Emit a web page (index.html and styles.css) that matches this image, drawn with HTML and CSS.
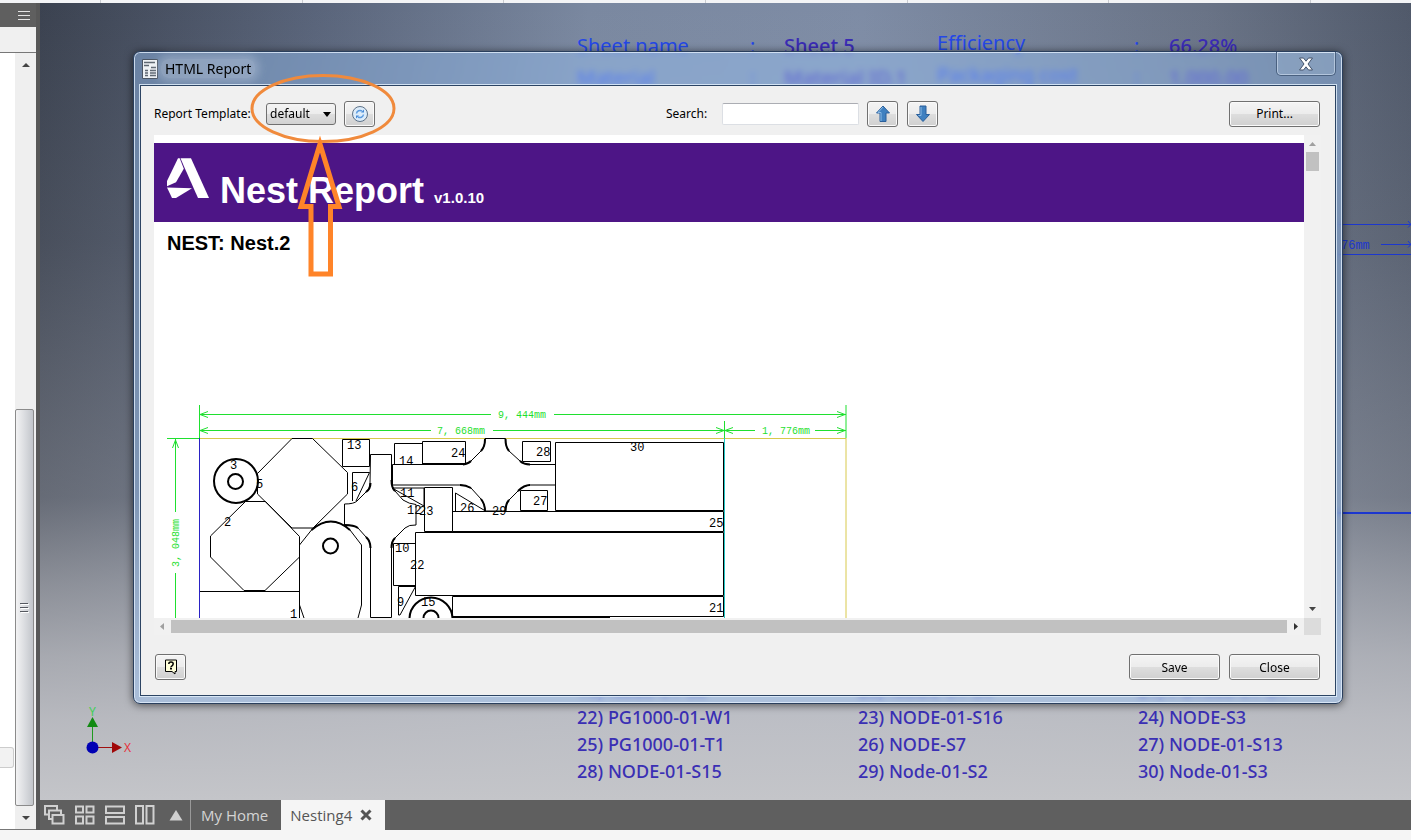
FILE: index.html
```
<!DOCTYPE html>
<html lang="en">
  <head>
    <meta charset="UTF-8" />
    <meta name="viewport" content="width=device-width, initial-scale=1.0" />
    <title>HTML Report</title>
    <link rel="stylesheet" href="styles.css">
  </head>
  <body>
    <div class="ribbon"><span></span><span></span><span></span><span></span><span></span><span></span><span></span></div>

    <div class="workspace">
      <aside class="browser">
        <div class="browser-header">
          <svg width="12" height="11" viewBox="0 0 12 11"><path d="M0 1.5h12M0 5.5h12M0 9.5h12" stroke="#e4e4e4" /></svg>
        </div>
        <div class="browser-tools"></div>
        <div class="browser-body">
          <div class="browser-tree"><div class="tree-button"></div></div>
          <div class="side-scroll">
            <div class="side-arrow"><svg width="8" height="4" viewBox="0 0 8 4"><path d="M0 4L4 0l4 4z" fill="#444" /></svg></div>
            <div class="side-thumb">
              <svg width="9" height="12" viewBox="0 0 9 12"><path d="M0 1.5h8M0 5.5h8M0 9.5h8" stroke="#55585f" /><path d="M1 2.5h8M1 6.5h8M1 10.5h8" stroke="#fff" /></svg>
            </div>
            <div class="side-arrow"><svg width="8" height="4" viewBox="0 0 8 4"><path d="M0 0h8L4 4z" fill="#444" /></svg></div>
          </div>
        </div>
      </aside>

      <div class="document">
        <main class="canvas">
          <div class="sheet-info">
            <span>Sheet name</span><span>:</span><b>Sheet 5</b><span class="raised">Efficiency</span><span>:</span><b>66.28%</b>
            <span>Material</span><span>:</span><b>Material ID.1</b><span class="raised">Packaging cost</span><span>:</span><b>1,000.00</b>
          </div>

          <div class="sheet-parts">
            <span>19) Node-01-S6</span><span>20) NODE-01-S4</span><span>21) PG1000-01-B1</span>
            <span>22) PG1000-01-W1</span><span>23) NODE-01-S16</span><span>24) NODE-S3</span>
            <span>25) PG1000-01-T1</span><span>26) NODE-S7</span><span>27) NODE-01-S13</span>
            <span>28) NODE-01-S15</span><span>29) Node-01-S2</span><span>30) Node-01-S3</span>
          </div>

          <svg class="sheet-lines" width="76" height="300" viewBox="1335 220 76 300">
            <g stroke="#1c37cf" fill="none">
              <path d="M1335 224.5h76M1381 244.5h30M1335 254.5h76M1408 221l3 3.5-3 3M1408 241l3 3.5-3 3" />
              <path d="M1335 513h76" stroke-width="2" />
            </g>
            <text x="1341" y="249">76mm</text>
          </svg>

          <svg class="triad" width="50" height="52" viewBox="84 704 50 52">
            <path d="M92.500 747V726" stroke="#1f9a1f" />
            <path d="M87 727l5.500-10 5.500 10z" fill="#128a12" />
            <path d="M92 747.500h21" stroke="#a01010" />
            <path d="M112 742l10 5.500-10 5.500z" fill="#a00808" />
            <circle cx="92.500" cy="747.500" r="6" fill="#0000b4" />
            <text x="89" y="716" fill="#3fd055">Y</text>
            <text x="124" y="752" fill="#e6323c">X</text>
          </svg>

          <section class="dialog">
            <header class="title-bar">
              <svg class="title-icon" width="16" height="20" viewBox="0 0 16 20">
                <path d="M.5.5h15v19H.5z" fill="#eef1f4" stroke="#4b5563" />
                <path d="M2 3.500h11M2 6.500h5M9 8.500h5M3 11.500h3M8 11.500h6M3 14h3M8 14h6M3 16.500h3M8 16.500h6" stroke="#5d6670" stroke-width="1.300" />
              </svg>
              <span class="title">HTML Report</span>
              <button class="window-close" type="button" aria-label="Close window">
                <svg width="16" height="14" viewBox="0 0 16 14"><path d="M1.500 1h4L8 4.200 10.500 1h4L10 7l4.500 6h-4L8 9.800 5.500 13h-4L6 7z" fill="#fff" stroke="#44536b" /></svg>
              </button>
            </header>

            <div class="client">
              <div class="toolbar">
                <div class="tool-group">
                  <label class="template-label" for="template">Report Template:</label>
                  <span class="select-box">
                    <select id="template"><option>default</option></select>
                  </span>
                  <button class="icon-button" type="button" aria-label="Refresh">
                    <svg width="18" height="18" viewBox="0 0 18 18">
                      <circle cx="9" cy="9" r="7.500" fill="#dcecfa" stroke="#5d7288" />
                      <path d="M5.500 8.500A3.600 3.600 0 0 1 11 6M12.500 9.500A3.600 3.600 0 0 1 7 12" fill="none" stroke="#5a9be0" stroke-width="1.500" />
                      <path d="M10 7.500h3V4.500zM8 10.500H5v3z" fill="#4489d6" />
                    </svg>
                  </button>
                </div>
                <div class="tool-group">
                  <label class="search-label" for="search">Search:</label>
                  <input id="search" type="text">
                  <button class="icon-button" type="button" aria-label="Previous match">
                    <svg width="16" height="18" viewBox="0 0 16 18"><path d="M8 1l6.500 7H11v8.500H5V8H1.500z" fill="#3f80c0" stroke="#2a5f9b" /><path d="M8 2L3 7.500h3V16" fill="none" stroke="#8abbe6" /></svg>
                  </button>
                  <button class="icon-button" type="button" aria-label="Next match">
                    <svg width="16" height="18" viewBox="0 0 16 18"><path d="M8 16.500l6.500-7H11V1H5v8.500H1.500z" fill="#3f80c0" stroke="#2a5f9b" /><path d="M3.500 10.500H6V2" fill="none" stroke="#8abbe6" /></svg>
                  </button>
                </div>
                <button class="text-button" type="button">Print...</button>
              </div>

              <div class="viewer">
                <article class="report">
                  <div class="banner">
                    <svg class="logo" width="43" height="41" viewBox="0 0 43 41">
                      <g fill="#fff">
                        <path d="M14.500.3H25l18 39.700H32L18.700 10z" />
                        <path d="M12 .3L1 23v5.300l9-4 7.800-13.500L13.700.3z" />
                        <path d="M1 29.500l25 .8L10 40H6z" />
                      </g>
                    </svg>
                    <h1>Nest Report <small>v1.0.10</small></h1>
                  </div>
                  <h2>NEST: Nest.2</h2>

                  <svg class="drawing" width="700" height="218" viewBox="154 400 700 218">
                    <!-- sheet borders -->
                    <path d="M199 438.500h647M846 438v180" stroke="#d8c94c" fill="none" />
                    <path d="M724.500 438v180" stroke="#25c7c7" />

                    <!-- dimensions -->
                    <g class="dimension">
                      <path d="M199.500 405v33M846 405v33M724.500 421v17M167 438.500h32" />
                      <path d="M199 414.500h292M554 414.500h292M199 430.500h232M493 430.500h262M815 430.500h31M175.500 439v73M175.500 573v45" />
                      <path d="M208 411.500l-8 3 8 3M837 411.500l8 3-8 3M208 427.500l-8 3 8 3M716 427.500l8 3-8 3M733 427.500l-8 3 8 3M837 427.500l8 3-8 3M172.500 448l3-8 3 8" />
                      <text x="498" y="418">9, 444mm</text>
                      <text x="437" y="434">7, 668mm</text>
                      <text x="762" y="434">1, 776mm</text>
                      <text transform="translate(179 567) rotate(-90)">3, 048mm</text>
                    </g>

                    <!-- nested parts -->
                    <g class="parts">
                      <path d="M555.500 442.500h168v68h-168zM452.500 511.500h271v20h-271zM415.500 532.500h308v63h-308zM452.500 596.500h271v20h-271z" />
                      <path d="M342.500 439.500h27v27h-27zM394.500 443.500h28v21h-28zM422.500 441.500h43v22h-43zM522.500 441.500h28v20h-28zM520.500 490.500h27v20h-27z" />
                      <path d="M424.500 487.500h28v44h-28zM393.500 543.500h22v42h-22zM199.500 591.500h100v30h-100z" />
                      <path d="M292 438.500h20.500l35 34V494L313 528h-21l-34.500-34v-20.500z" />
                      <path d="M245.500 501.500h20l34 35V557L265 590.500h-21L210.500 557v-21z" />
                      <path d="M304 618l-4.500-13v-60l12-15Q331 513 350 530l11.500 15v60l-3.500 13" />
                      <path d="M370.500 454.500h21V480q0 8 3.500 11l8 9q6 4 13 4.500V525q-7-.5-11 3l-10 10q-3.500 3-3.500 10v69.500h-21V548q0-7-4.500-11l-8-9q-4-3-13.500-3v-21q9.500 0 12.500-3l9-9q4-3 4-9z" />
                      <path d="M392.500 464.500H463q5-.5 8-3.500l10-10q4-4 4-12.500h20.500q0 8.500 3.500 12.500l11 10q4 3.500 10 3.500h25.500V485H530q-6 0-12 6l-9 9q-3.500 4-3.500 11H485q0-7-4-12l-10-11q-5-3-11-3h-67.500z" />
                      <path d="M352.500 501v-28.500h17L356 501M392 488h32v18zM455.500 511v-18l30 18M398.500 615v-28.500h17L400 615z" />
                      <g class="heavy">
                        <circle cx="236" cy="481" r="22" />
                        <circle cx="235.500" cy="481.500" r="7.500" />
                        <circle cx="330.500" cy="546" r="7.500" />
                        <circle cx="431" cy="619" r="21.500" />
                        <circle cx="431" cy="618" r="7.500" />
                        <path d="M311.500 530Q331 513 350 530M452 617h158M366 537q4.500 4 4.500 11M366 492q4.500-3 4.500-9M344.500 525q9.500 0 13.500 3M391.500 480q0 8 3.500 11M395 538q-3.500 3-3.500 10M471 461q-3 3-8 3.500M481 451q4-4 4-12M505.500 439q0 8 3.500 12M520 461q4 3.500 10 3.500M530 485q-6 0-12 6M509 500q-3.500 4-3.500 11M485 511q0-7-4-12M471 488q-5-3-11-3" />
                      </g>
                    </g>
                    <path d="M199.500 438v180" stroke="#2a22c4" />

                    <g class="part-numbers">
                      <text x="230" y="469">3</text><text x="256" y="488">5</text><text x="224" y="526">2</text>
                      <text x="290" y="618">1</text><text x="347" y="449">13</text><text x="351" y="491">6</text>
                      <text x="399" y="465">14</text><text x="451" y="457">24</text><text x="536" y="456">28</text>
                      <text x="400" y="497">11</text><text x="407" y="514">12</text><text x="419" y="515">23</text>
                      <text x="395" y="552">10</text><text x="410" y="569">22</text><text x="397" y="606">9</text>
                      <text x="421" y="606">15</text><text x="460" y="512">26</text><text x="492" y="515">29</text>
                      <text x="533" y="505">27</text><text x="630" y="451">30</text><text x="709" y="527">25</text>
                      <text x="709" y="612">21</text>
                    </g>
                  </svg>
                </article>

                <div class="scroll-y">
                  <svg width="7" height="4" viewBox="0 0 7 4"><path d="M0 4l3.500-4L7 4z" fill="#a0a0a0" /></svg>
                  <div class="thumb-y"></div>
                  <svg class="last" width="7" height="4" viewBox="0 0 7 4"><path d="M0 0h7L3.500 4z" fill="#444" /></svg>
                </div>
                <div class="scroll-x">
                  <svg width="4" height="7" viewBox="0 0 4 7"><path d="M4 0v7L0 3.500z" fill="#a0a0a0" /></svg>
                  <div class="thumb-x"></div>
                  <svg width="4" height="7" viewBox="0 0 4 7"><path d="M0 0v7l4-3.500z" fill="#333" /></svg>
                </div>
                <div class="scroll-corner"></div>
              </div>

              <footer class="actions">
                <button class="icon-button help" type="button" aria-label="Help">
                  <svg width="14" height="16" viewBox="0 0 14 16">
                    <path d="M1.500 1h11v11.500h-1.500V15L8 12.500H1.500z" fill="#ffffd9" stroke="#000" />
                    <path d="M4.800 5q0-2 2.200-2t2.200 1.800Q9.200 6 8 6.800T7 8.500" fill="none" stroke="#000" stroke-width="1.500" />
                    <path d="M6 9.800h2" stroke="#000" stroke-width="1.600" />
                  </svg>
                </button>
                <button class="text-button" type="button">Save</button>
                <button class="text-button" type="button">Close</button>
              </footer>
            </div>

            <svg class="annotation" width="150" height="210" viewBox="250 70 150 210">
              <ellipse cx="323" cy="108.500" rx="71" ry="33" fill="none" stroke="#f08a3c" stroke-width="3" />
              <path d="M320 144l-19 62.500h10v67.500h19.500v-67.500H339z" fill="none" stroke="#ff8429" stroke-width="5" />
            </svg>
          </section>
        </main>

        <nav class="tabs">
          <div class="layout-buttons">
            <button type="button" aria-label="Cascade"><svg width="21" height="20" viewBox="0 0 21 20"><path d="M13 4.500V1H1v8.500h3M17 9V5.500H5V14h3M8.500 10h11v8.500h-11z" /></svg></button>
            <button type="button" aria-label="Arrange all"><svg width="20" height="20" viewBox="0 0 20 20"><path d="M1 1.500h7v6H1zM11.500 1.500h7v6h-7zM1 11.500h7v7H1zM11.500 11.500h7v7h-7z" /></svg></button>
            <button type="button" aria-label="Tile horizontally"><svg width="20" height="20" viewBox="0 0 20 20"><path d="M1 1.500h18v6.500H1zM1 12h18v6.500H1z" /></svg></button>
            <button type="button" aria-label="Tile vertically"><svg width="20" height="20" viewBox="0 0 20 20"><path d="M1 1h7v17.500H1zM11.500 1h7v17.500h-7z" /></svg></button>
            <button type="button" aria-label="More"><svg width="14" height="20" viewBox="0 0 14 20"><path class="solid" d="M0.500 15.500L7 5l6.500 10.500z" /></svg></button>
          </div>
          <a class="tab" href="#home">My Home</a>
          <a class="tab active" href="#nesting">Nesting4
            <svg width="12" height="12" viewBox="0 0 12 12"><path d="M1.500 1.500l9 9M10.500 1.500l-9 9" stroke="#555" stroke-width="3" /></svg>
          </a>
        </nav>
      </div>
    </div>
    <div class="status-bar"></div>
  </body>
</html>
```
FILE: styles.css
```
* {
  box-sizing: border-box;
}

body {
  margin: 0;
  height: 100vh;
  display: flex;
  flex-direction: column;
  overflow: hidden;
  background: #f5f5f5;
  font-family: "Noto Sans", sans-serif;
  font-size: 12px;
  color: #000;
}

svg {
  display: block;
  flex: none;
}

button,
input,
select {
  font: inherit;
  color: inherit;
}

.ribbon {
  flex: none;
  height: 3px;
  display: flex;
  justify-content: space-around;
  background: #f3f4f6;
}

.ribbon span {
  width: 1px;
  background: #c9cbd0;
}

.workspace {
  flex: 1;
  min-height: 0;
  display: flex;
}

.status-bar {
  flex: none;
  height: 10px;
  background: #f5f5f5;
}

/* browser panel */
.browser {
  flex: none;
  width: 40px;
  display: flex;
  flex-direction: column;
  border-right: 4px solid #585858;
  background: #fff;
}

.browser-header {
  height: 24px;
  display: flex;
  align-items: center;
  justify-content: flex-end;
  padding-right: 6px;
  background: #5f5f5f;
}

.browser-tools {
  height: 26px;
  background: #f0f0f0;
  border-bottom: 1px solid #777;
}

.browser-body {
  flex: 1;
  display: flex;
  border-bottom: 1px solid #777;
}

.browser-tree {
  width: 15px;
  display: flex;
  align-items: flex-end;
  padding-bottom: 61px;
}

.tree-button {
  width: 14px;
  height: 21px;
  border: 1px solid #ccc;
  border-left: 0;
  border-radius: 0 3px 3px 0;
  background: #f2f2f2;
}

.side-scroll {
  flex: 1;
  display: flex;
  flex-direction: column;
  background: #efefef;
}

.side-arrow {
  height: 23px;
  display: flex;
  align-items: center;
  justify-content: center;
}

.side-thumb {
  height: 397px;
  width: 19px;
  margin-top: auto;
  display: flex;
  align-items: center;
  justify-content: center;
  border: 1px solid #8b8b8b;
  border-radius: 2px;
  background: linear-gradient(90deg, #f3f3f4, #d6d8dc 60%, #c2c5ca);
}

/* model view */
.document {
  flex: 1;
  min-width: 0;
  display: flex;
  flex-direction: column;
}

.canvas {
  flex: 1;
  position: relative;
  overflow: hidden;
  display: flex;
  flex-direction: column;
  justify-content: space-between;
  padding: 26px 0 16px 537px;
  background:
    linear-gradient(180deg, rgba(194, 195, 200, 0) 0%, rgba(194, 195, 200, 0.1) 30%, rgba(194, 195, 200, 0.32) 62%, rgba(194, 195, 200, 0.6) 73%, rgba(194, 195, 200, 0.8) 82%, rgba(194, 195, 200, 0.92) 90%, #c4c5c9 100%),
    linear-gradient(90deg, #3b4250 0%, #59647a 20%, #7a88a0 40%, #7e8ca5 60%, #697386 85%, #50596a 100%);
}

.sheet-info {
  display: grid;
  grid-template-columns: 173px 34px 153px 197px 35px auto;
  grid-auto-rows: 32px;
  align-items: center;
  font-size: 20px;
  color: #2447e6;
}

.sheet-info b {
  font-weight: 500;
  color: #3a2bb4;
}

.raised {
  padding-bottom: 6px;
}

.sheet-parts {
  display: grid;
  grid-template-columns: 281px 280px auto;
  grid-auto-rows: 27px;
  align-items: center;
  font-size: 18px;
  font-weight: 500;
  color: #3a2fb4;
}

.sheet-lines {
  position: absolute;
  top: 217px;
  right: 0;
  font-family: "Liberation Mono", monospace;
  font-size: 12px;
  fill: #1c37cf;
}

.triad {
  position: absolute;
  left: 44px;
  bottom: 44px;
  font-size: 12px;
}

/* report window */
.dialog {
  position: absolute;
  top: 48px;
  right: 68px;
  bottom: 96px;
  left: 93px;
  display: flex;
  flex-direction: column;
  padding: 0 6px 7px;
  border: 1px solid #2a3f5d;
  border-radius: 7px;
  background: rgba(155, 200, 255, 0.42);
  backdrop-filter: blur(3px);
  box-shadow: inset 0 0 0 1px rgba(225, 238, 252, 0.8), 0 1px 8px rgba(0, 0, 0, 0.6);
}

.title-bar {
  height: 33px;
  display: flex;
  align-items: center;
  gap: 7px;
  padding-left: 2px;
  font-size: 14px;
}

.title {
  padding: 0 4px;
  margin-left: -4px;
  border-radius: 8px;
  background: rgba(215, 225, 238, 0.3);
  box-shadow: 0 0 8px 4px rgba(215, 225, 238, 0.3);
}

.window-close {
  align-self: flex-start;
  width: 60px;
  height: 24px;
  margin-left: auto;
  display: flex;
  align-items: center;
  justify-content: center;
  border: 1px solid #4a6180;
  border-top: 0;
  border-radius: 0 0 5px 5px;
  background: rgba(180, 200, 222, 0.25);
  box-shadow: inset 0 0 0 1px rgba(225, 238, 252, 0.5);
}

.client {
  flex: 1;
  min-height: 0;
  display: flex;
  flex-direction: column;
  padding: 0 14px 0 13px;
  border: 1px solid #2c4463;
  outline: 1px solid rgba(225, 238, 252, 0.85);
  background: #f0f0f0;
}

.toolbar {
  height: 49px;
  flex: none;
  display: flex;
  align-items: center;
  justify-content: space-between;
  padding: 6px 1px 0 0;
}

.tool-group {
  display: flex;
  align-items: center;
}

.template-label {
  width: 112px;
}

.search-label {
  width: 56px;
}

.select-box {
  position: relative;
  margin-right: 8px;
}

.select-box::after {
  content: "";
  position: absolute;
  top: 9px;
  right: 5px;
  border: 4px solid transparent;
  border-top: 5px solid #000;
  border-bottom: 0;
  pointer-events: none;
}

.select-box select {
  display: block;
  width: 70px;
  height: 22px;
  padding: 0 3px;
  appearance: none;
  border: 1px solid #707070;
  border-radius: 3px;
  background: linear-gradient(#f4f4f4, #ececec 50%, #dedede 50%, #d2d2d2);
}

#search {
  width: 137px;
  height: 22px;
  padding: 0 4px;
  border: 1px solid #dcdfe4;
  border-top-color: #abadb3;
  border-radius: 2px;
  background: #fff;
}

.icon-button,
.text-button {
  display: flex;
  align-items: center;
  justify-content: center;
  height: 26px;
  padding: 0;
  border: 1px solid #707070;
  border-radius: 3px;
  background: linear-gradient(#f4f4f4, #ececec 50%, #dedede 50%, #d0d0d0);
  box-shadow: inset 0 0 0 1px #fafafa;
}

.icon-button {
  width: 31px;
}

#search + .icon-button {
  margin: 0 9px 0 8px;
}

.text-button {
  width: 91px;
}

.viewer {
  flex: 1;
  min-height: 0;
  display: grid;
  grid-template: minmax(0, 1fr) 17px / minmax(0, 1fr) 17px;
}

.report {
  display: flex;
  flex-direction: column;
  overflow: hidden;
  padding-top: 8px;
  background: #fff;
  font-family: "Liberation Sans", sans-serif;
}

.banner {
  flex: none;
  height: 79px;
  display: flex;
  align-items: flex-start;
  gap: 11px;
  padding: 15px 12px 0;
  background: #4d1586;
  color: #fff;
}

.banner h1 {
  margin: 12px 0 0;
  font-size: 36px;
  line-height: 41px;
}

.banner small {
  font-size: 15px;
}

.report h2 {
  margin: 9px 13px;
  font-size: 20px;
  line-height: 24px;
}

.drawing {
  margin-top: auto;
}

.dimension path {
  fill: none;
  stroke: #1fe02f;
}

.dimension text {
  fill: #1fe02f;
  font-family: "Liberation Mono", monospace;
  font-size: 10px;
}

.parts {
  fill: none;
  stroke: #000;
}

.heavy {
  stroke-width: 2;
}

.part-numbers {
  font-family: "Liberation Mono", monospace;
  font-size: 12px;
}

.scroll-y,
.scroll-x {
  display: flex;
  align-items: center;
  background: #f1f1f1;
}

.scroll-y {
  flex-direction: column;
  padding: 7px 0 7px;
}

.scroll-y .last {
  margin-top: auto;
}

.thumb-y {
  width: 13px;
  height: 19px;
  margin-top: 6px;
  background: #c1c1c1;
}

.scroll-x {
  gap: 7px;
  padding: 0 6px;
}

.thumb-x {
  flex: 1;
  height: 13px;
  background: #c1c1c1;
}

.scroll-corner {
  background: #dcdcdc;
}

.actions {
  flex: none;
  height: 60px;
  display: flex;
  align-items: center;
  gap: 9px;
  padding: 4px 1px 0;
}

.help {
  margin-right: auto;
}

.annotation {
  position: absolute;
  top: 18px;
  left: 116px;
  pointer-events: none;
}

/* document tabs */
.tabs {
  flex: none;
  height: 30px;
  display: flex;
  background: #5f5f5f;
  font-size: 15px;
}

.layout-buttons {
  width: 151px;
  display: flex;
  align-items: center;
  gap: 10px;
  padding-left: 4px;
  border-right: 1px solid #999;
}

.layout-buttons button {
  padding: 0;
  border: 0;
  background: none;
}

.layout-buttons button:last-child {
  margin-left: 4px;
}

.layout-buttons path {
  fill: none;
  stroke: #d0d0d0;
  stroke-width: 2;
}

.layout-buttons .solid {
  fill: #d0d0d0;
  stroke: none;
}

.tab {
  display: flex;
  align-items: center;
  gap: 8px;
  padding: 0 13px 0 10px;
  color: #d4d4d4;
  font-family: "Open Sans", sans-serif;
  text-decoration: none;
}

.tab.active {
  padding-left: 9px;
  background: #f5f5f5;
  color: #555;
}
```
